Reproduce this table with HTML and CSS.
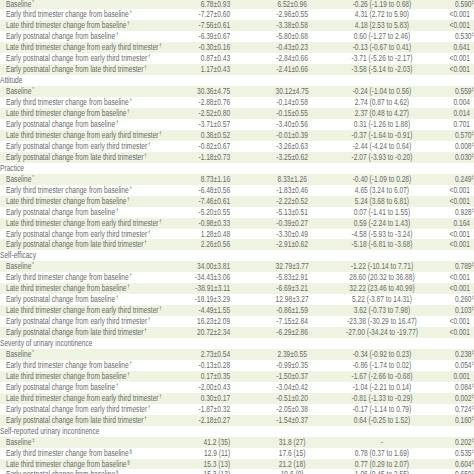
FILE: index.html
```html
<!DOCTYPE html>
<html>
<head>
<meta charset="utf-8">
<link rel="stylesheet" href="styles.css">
</head>
<body>
<div class="table">
  <div class="row g"><div class="lab">Baseline<sup>*</sup></div><div class="c2">6.78±0.93</div><div class="c3">6.52±0.96</div><div class="c4">-0.26 (-1.19 to 0.68)</div><div class="c5">0.590<sup class="p">‡</sup></div></div>
  <div class="row"><div class="lab">Early third trimester change from baseline<sup>†</sup></div><div class="c2">-7.27±0.60</div><div class="c3">-2.96±0.55</div><div class="c4">4.31 (2.72 to 5.90)</div><div class="c5">&lt;0.001</div></div>
  <div class="row g"><div class="lab">Late third trimester change from baseline<sup>†</sup></div><div class="c2">-7.56±0.61</div><div class="c3">-3.38±0.58</div><div class="c4">4.18 (2.53 to 5.83)</div><div class="c5">&lt;0.001</div></div>
  <div class="row"><div class="lab">Early postnatal change from baseline<sup>†</sup></div><div class="c2">-6.39±0.67</div><div class="c3">-5.80±0.68</div><div class="c4">0.60 (-1.27 to 2.46)</div><div class="c5">0.530<sup class="p">‡</sup></div></div>
  <div class="row g"><div class="lab">Late third trimester change from early third trimester<sup>†</sup></div><div class="c2">-0.30±0.16</div><div class="c3">-0.43±0.23</div><div class="c4">-0.13 (-0.67 to 0.41)</div><div class="c5">0.641</div></div>
  <div class="row"><div class="lab">Early postnatal change from early third trimester<sup>†</sup></div><div class="c2">0.87±0.43</div><div class="c3">-2.84±0.66</div><div class="c4">-3.71 (-5.26 to -2.17)</div><div class="c5">&lt;0.001</div></div>
  <div class="row g"><div class="lab">Early postnatal change from late third trimester<sup>†</sup></div><div class="c2">1.17±0.43</div><div class="c3">-2.41±0.66</div><div class="c4">-3.58 (-5.14 to -2.03)</div><div class="c5">&lt;0.001</div></div>

  <div class="row"><div class="sec">Attitude</div></div>
  <div class="row g"><div class="lab">Baseline<sup>*</sup></div><div class="c2">30.36±4.75</div><div class="c3">30.12±4.75</div><div class="c4">-0.24 (-1.04 to 0.56)</div><div class="c5">0.559<sup class="p">‡</sup></div></div>
  <div class="row"><div class="lab">Early third trimester change from baseline<sup>†</sup></div><div class="c2">-2.88±0.76</div><div class="c3">-0.14±0.58</div><div class="c4">2.74 (0.87 to 4.62)</div><div class="c5">0.004</div></div>
  <div class="row g"><div class="lab">Late third trimester change from baseline<sup>†</sup></div><div class="c2">-2.52±0.80</div><div class="c3">-0.15±0.55</div><div class="c4">2.37 (0.48 to 4.27)</div><div class="c5">0.014</div></div>
  <div class="row"><div class="lab">Early postnatal change from baseline<sup>†</sup></div><div class="c2">-3.71±0.57</div><div class="c3">-3.40±0.56</div><div class="c4">0.31 (-1.26 to 1.88)</div><div class="c5">0.701</div></div>
  <div class="row g"><div class="lab">Late third trimester change from early third trimester<sup>†</sup></div><div class="c2">0.36±0.52</div><div class="c3">-0.01±0.39</div><div class="c4">-0.37 (-1.64 to -0.91)</div><div class="c5">0.570<sup class="p">‡</sup></div></div>
  <div class="row"><div class="lab">Early postnatal change from early third trimester<sup>†</sup></div><div class="c2">-0.82±0.67</div><div class="c3">-3.26±0.63</div><div class="c4">-2.44 (-4.24 to 0.64)</div><div class="c5">0.008<sup class="p">‡</sup></div></div>
  <div class="row g"><div class="lab">Early postnatal change from late third trimester<sup>†</sup></div><div class="c2">-1.18±0.73</div><div class="c3">-3.25±0.62</div><div class="c4">-2.07 (-3.93 to -0.20)</div><div class="c5">0.030<sup class="p">‡</sup></div></div>

  <div class="row"><div class="sec">Practice</div></div>
  <div class="row g"><div class="lab">Baseline<sup>*</sup></div><div class="c2">8.73±1.16</div><div class="c3">8.33±1.26</div><div class="c4">-0.40 (-1.09 to 0.28)</div><div class="c5">0.249<sup class="p">‡</sup></div></div>
  <div class="row"><div class="lab">Early third trimester change from baseline<sup>†</sup></div><div class="c2">-6.48±0.56</div><div class="c3">-1.83±0.46</div><div class="c4">4.65 (3.24 to 6.07)</div><div class="c5">&lt;0.001</div></div>
  <div class="row g"><div class="lab">Late third trimester change from baseline<sup>†</sup></div><div class="c2">-7.46±0.61</div><div class="c3">-2.22±0.52</div><div class="c4">5.24 (3.68 to 6.81)</div><div class="c5">&lt;0.001</div></div>
  <div class="row"><div class="lab">Early postnatal change from baseline<sup>†</sup></div><div class="c2">-5.20±0.55</div><div class="c3">-5.13±0.51</div><div class="c4">0.07 (-1.41 to 1.55)</div><div class="c5">0.928<sup class="p">‡</sup></div></div>
  <div class="row g"><div class="lab">Late third trimester change from early third trimester<sup>†</sup></div><div class="c2">-0.98±0.33</div><div class="c3">-0.39±0.27</div><div class="c4">0.59 (-2.24 to 1.43)</div><div class="c5">0.164</div></div>
  <div class="row"><div class="lab">Early postnatal change from early third trimester<sup>†</sup></div><div class="c2">1.28±0.48</div><div class="c3">-3.30±0.49</div><div class="c4">-4.58 (-5.93 to -3.24)</div><div class="c5">&lt;0.001</div></div>
  <div class="row g"><div class="lab">Early postnatal change from late third trimester<sup>†</sup></div><div class="c2">2.26±0.56</div><div class="c3">-2.91±0.62</div><div class="c4">-5.18 (-6.81 to -3.68)</div><div class="c5">&lt;0.001</div></div>

  <div class="row"><div class="sec">Self-efficacy</div></div>
  <div class="row g"><div class="lab">Baseline<sup>*</sup></div><div class="c2">34.00±3.81</div><div class="c3">32.79±3.77</div><div class="c4">-1.22 (-10.14 to 7.71)</div><div class="c5">0.789<sup class="p">‡</sup></div></div>
  <div class="row"><div class="lab">Early third trimester change from baseline<sup>†</sup></div><div class="c2">-34.43±3.06</div><div class="c3">-5.83±2.91</div><div class="c4">28.60 (20.32 to 36.88)</div><div class="c5">&lt;0.001</div></div>
  <div class="row g"><div class="lab">Late third trimester change from baseline<sup>†</sup></div><div class="c2">-38.91±3.11</div><div class="c3">-6.69±3.21</div><div class="c4">32.22 (23.46 to 40.99)</div><div class="c5">&lt;0.001</div></div>
  <div class="row"><div class="lab">Early postnatal change from baseline<sup>†</sup></div><div class="c2">-18.19±3.29</div><div class="c3">12.98±3.27</div><div class="c4">5.22 (-3.87 to 14.31)</div><div class="c5">0.260<sup class="p">‡</sup></div></div>
  <div class="row g"><div class="lab">Late third trimester change from early third trimester<sup>†</sup></div><div class="c2">-4.49±1.55</div><div class="c3">-0.86±1.59</div><div class="c4">3.62 (-0.73 to 7.98)</div><div class="c5">0.103<sup class="p">‡</sup></div></div>
  <div class="row"><div class="lab">Early postnatal change from early third trimester<sup>†</sup></div><div class="c2">16.23±2.09</div><div class="c3">-7.15±2.84</div><div class="c4">-23.38 (-30.29 to 16.47)</div><div class="c5">&lt;0.001</div></div>
  <div class="row g"><div class="lab">Early postnatal change from late third trimester<sup>†</sup></div><div class="c2">20.72±2.34</div><div class="c3">-6.29±2.86</div><div class="c4">-27.00 (-34.24 to -19.77)</div><div class="c5">&lt;0.001</div></div>

  <div class="row"><div class="sec">Severity of urinary incontinence</div></div>
  <div class="row g"><div class="lab">Baseline<sup>*</sup></div><div class="c2">2.73±0.54</div><div class="c3">2.39±0.55</div><div class="c4">-0.34 (-0.92 to 0.23)</div><div class="c5">0.238<sup class="p">‡</sup></div></div>
  <div class="row"><div class="lab">Early third trimester change from baseline<sup>†</sup></div><div class="c2">-0.13±0.28</div><div class="c3">-0.99±0.35</div><div class="c4">-0.86 (-1.74 to 0.02)</div><div class="c5">0.054<sup class="p">‡</sup></div></div>
  <div class="row g"><div class="lab">Late third trimester change from baseline<sup>†</sup></div><div class="c2">0.17±0.35</div><div class="c3">-1.50±0.37</div><div class="c4">-1.67 (-2.66 to -0.68)</div><div class="c5">0.001</div></div>
  <div class="row"><div class="lab">Early postnatal change from baseline<sup>†</sup></div><div class="c2">-2.00±0.43</div><div class="c3">-3.04±0.42</div><div class="c4">-1.04 (-2.21 to 0.14)</div><div class="c5">0.084<sup class="p">‡</sup></div></div>
  <div class="row g"><div class="lab">Late third trimester change from early third trimester<sup>†</sup></div><div class="c2">0.30±0.17</div><div class="c3">-0.51±0.20</div><div class="c4">-0.81 (-1.33 to -0.29)</div><div class="c5">0.002<sup class="p">‡</sup></div></div>
  <div class="row"><div class="lab">Early postnatal change from early third trimester<sup>†</sup></div><div class="c2">-1.87±0.32</div><div class="c3">-2.05±0.38</div><div class="c4">-0.17 (-1.14 to 0.79)</div><div class="c5">0.724<sup class="p">‡</sup></div></div>
  <div class="row g"><div class="lab">Early postnatal change from late third trimester<sup>†</sup></div><div class="c2">-2.18±0.27</div><div class="c3">-1.54±0.37</div><div class="c4">0.64 (-0.25 to 1.52)</div><div class="c5">0.160<sup class="p">‡</sup></div></div>

  <div class="row"><div class="sec">Self-reported urinary incontinence</div></div>
  <div class="row g"><div class="lab">Baseline<sup>‡</sup></div><div class="c2">41.2 (35)</div><div class="c3">31.8 (27)</div><div class="c4">-</div><div class="c5">0.202<sup class="p">‡</sup></div></div>
  <div class="row"><div class="lab">Early third trimester change from baseline<sup>§</sup></div><div class="c2">12.9 (11)</div><div class="c3">17.6 (15)</div><div class="c4">0.78 (0.37 to 1.69)</div><div class="c5">0.535<sup class="p">‡</sup></div></div>
  <div class="row g"><div class="lab">Late third trimester change from baseline<sup>§</sup></div><div class="c2">15.3 (13)</div><div class="c3">21.2 (18)</div><div class="c4">0.77 (0.29 to 2.07)</div><div class="c5">0.604<sup class="p">‡</sup></div></div>
  <div class="row"><div class="lab">Early postnatal change from baseline<sup>§</sup></div><div class="c2">15.3 (13)</div><div class="c3">10.6 (9)</div><div class="c4">1.06 (0.45 to 2.55)</div><div class="c5">0.650<sup class="p">‡</sup></div></div>
</div>
</body>
</html>
```
FILE: styles.css
```css
html, body {
  margin: 0;
  padding: 0;
  background: #ffffff;
  overflow: hidden;
}
body {
  width: 474px;
  height: 474px;
  font-family: "Liberation Sans", Arial, sans-serif;
  font-size: 8.5px;
  color: #6a6a6a;
}
/* the source table is set in a condensed face: emulate by a horizontal squeeze */
.table {
  display: flex;
  flex-direction: column;
  width: 608px;
  margin-top: -1.5px;
  transform: scaleX(0.78);
  transform-origin: 0 0;
}
.row {
  display: grid;
  grid-template-columns: 225px 70px 159px 71.4px 77.2px;
  height: 10.96px;
  line-height: 10.96px;
  white-space: nowrap;
}
.row.g {
  background: #eef3e2;
}
.lab {
  padding-left: 7.7px;
}
.sec {
  grid-column: 1 / 3;
  padding-left: 0;
}
.c2 {
  text-align: right;
}
.c3, .c4 {
  display: flex;
  justify-content: center;
}
.c5 {
  text-align: right;
}
sup {
  font-size: 5.5px;
  line-height: 0;
  vertical-align: 3px;
  margin-left: 1px;
}
sup.p {
  margin-right: -5px;
  margin-left: 0;
}
```
